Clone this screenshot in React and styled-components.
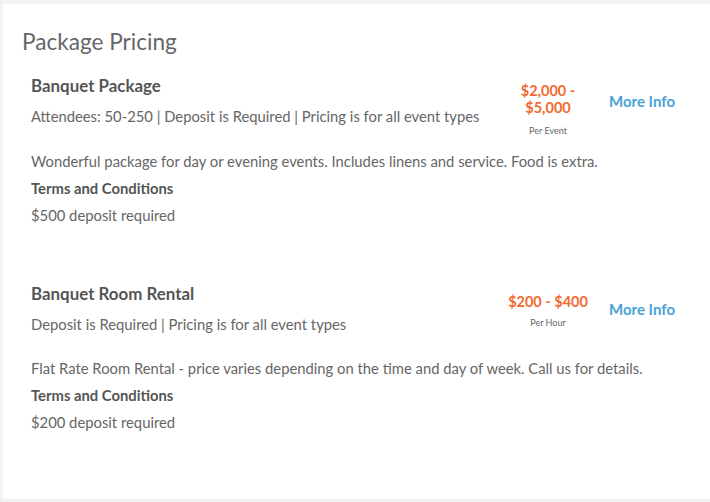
import React from 'react';
import styled, { createGlobalStyle } from 'styled-components';

const Global = createGlobalStyle`
  html, body {
    margin: 0;
    padding: 0;
    background: #f2f2f2;
    font-family: Lato, 'Open Sans', sans-serif;
  }
`;

const Page = styled.div`
  padding: 4px 0 3px 3px;
`;

const Card = styled.div`
  background: #fff;
  height: 495px;
  box-sizing: border-box;
  padding: 27px 20px 0 19px;
`;

const Title = styled.h2`
  margin: 0;
  font-size: 22.6px;
  font-weight: 400;
  color: #666;
  line-height: 22px;
`;

const Item = styled.div`
  padding-left: 9px;
  margin-top: ${({ $first }) => ($first ? '24px' : '56px')};
`;

const Head = styled.div`
  display: flex;
  align-items: flex-start;
`;

const Left = styled.div`
  flex: 1;
`;

const Name = styled.h3`
  margin: 0;
  font-size: 16.9px;
  font-weight: 700;
  color: #555;
  line-height: 18px;
`;

const Attrs = styled.div`
  margin-top: 13px;
  font-size: 14.8px;
  color: #666;
  line-height: 17px;
`;

const Price = styled.div`
  width: 90px;
  margin-top: ${({ $top }) => $top}px;
  text-align: center;
`;

const Amount = styled.div`
  font-size: 14.5px;
  font-weight: 700;
  color: #f26a2e;
  line-height: 17px;
`;

const Unit = styled.div`
  margin-top: ${({ $top }) => $top}px;
  font-size: 9px;
  color: #666;
  line-height: 10px;
`;

const More = styled.a`
  width: 97px;
  margin-top: 16px;
  padding-left: 16px;
  box-sizing: border-box;
  font-size: 15px;
  font-weight: 700;
  color: #4aa3d8;
  text-decoration: none;
  line-height: 17px;
  cursor: pointer;
`;

const Body = styled.div`
  margin-top: ${({ $top }) => $top}px;
  font-size: 14.8px;
  color: #666;
  line-height: 27px;
`;

const Terms = styled.div`
  font-weight: 700;
  color: #555;
`;

const packages = [
  {
    name: 'Banquet Package',
    attrs: 'Attendees: 50-250 | Deposit is Required | Pricing is for all event types',
    price: ['$2,000 -', '$5,000'],
    unit: 'Per Event',
    desc: 'Wonderful package for day or evening events. Includes linens and service. Food is extra.',
    deposit: '$500 deposit required',
    priceTop: 5,
    unitTop: 10,
    bodyTop: 12,
  },
  {
    name: 'Banquet Room Rental',
    attrs: 'Deposit is Required | Pricing is for all event types',
    price: ['$200 - $400'],
    unit: 'Per Hour',
    desc: 'Flat Rate Room Rental - price varies depending on the time and day of week. Call us for details.',
    deposit: '$200 deposit required',
    priceTop: 8,
    unitTop: 8,
    bodyTop: 22,
  },
];

export default function App() {
  return (
    <Page>
      <Global />
      <Card>
        <Title>Package Pricing</Title>
        {packages.map((p, i) => (
          <Item key={p.name} $first={i === 0}>
            <Head>
              <Left>
                <Name>{p.name}</Name>
                <Attrs>{p.attrs}</Attrs>
              </Left>
              <Price $top={p.priceTop}>
                {p.price.map((line) => (
                  <Amount key={line}>{line}</Amount>
                ))}
                <Unit $top={p.unitTop}>{p.unit}</Unit>
              </Price>
              <More>More Info</More>
            </Head>
            <Body $top={p.bodyTop}>
              <div>{p.desc}</div>
              <Terms>Terms and Conditions</Terms>
              <div>{p.deposit}</div>
            </Body>
          </Item>
        ))}
      </Card>
    </Page>
  );
}
